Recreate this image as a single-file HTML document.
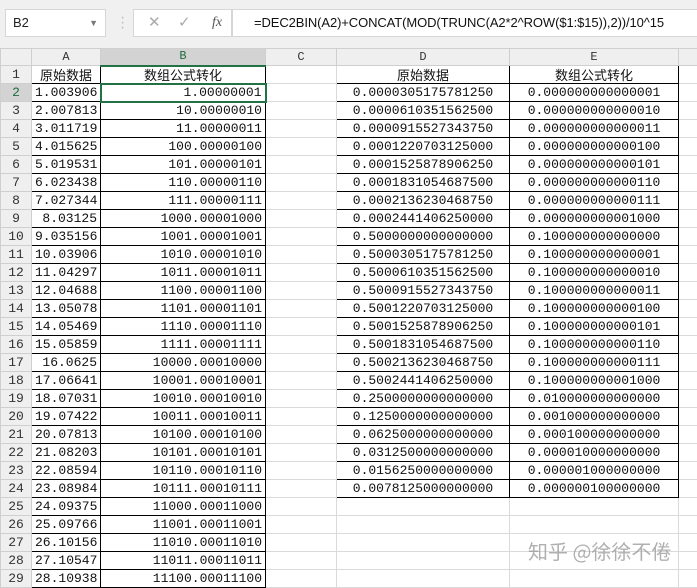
<!DOCTYPE html>
<html><head><meta charset="utf-8"><style>
body{margin:0;width:697px;height:579px;overflow:hidden;background:#fff;font-family:"Liberation Mono","Noto Sans CJK SC",monospace;position:relative}
.tb{position:absolute;left:0;top:0;width:697px;height:48px;background:#f0f0f0}
.box{position:absolute;background:#fff;border:1px solid #d6d6d6;top:9px;height:28px;box-sizing:border-box}
table{position:absolute;left:0;top:48px;width:708px;border-collapse:collapse;table-layout:fixed;font-size:13px}
tr{height:18px}
td{padding:0 3px;border:1px solid #dadada;white-space:nowrap;overflow:hidden;line-height:16px;color:#111;box-sizing:border-box}
tr.h{height:17px}
tr.h td{background:#efefef;text-align:center;font-size:12px;line-height:15px;color:#333;border-color:#cfcfcf}
td.r{background:#efefef;text-align:center;color:#333;border-color:#cfcfcf;padding:0}
td.n{text-align:right}
td.c{text-align:center}
.A{border:1px solid #000}
.cj{font-family:"Noto Sans CJK SC",sans-serif;font-size:13px;line-height:16px}
</style></head><body>
<div class="tb">
<div class="box" style="left:5px;width:101px;font:13px 'Liberation Sans',sans-serif;line-height:26px;padding-left:7px;color:#222">B2<span style="position:absolute;right:7px;top:0;font-size:9px;color:#777">▼</span></div>
<div style="position:absolute;left:119px;top:16px;color:#bbb;font-size:12px;line-height:5px">·<br>·<br>·</div>
<div class="box" style="left:133px;width:99px;color:#aaa;font:15px 'Liberation Sans',sans-serif;line-height:26px"><span style="position:absolute;left:14px">✕</span><span style="position:absolute;left:44px">✓</span><span style="position:absolute;left:78px;font-family:'Liberation Serif',serif;font-style:italic;color:#555;font-size:14px">fx</span></div>
<div class="box" style="left:232px;width:480px;font:13px 'Liberation Sans',sans-serif;line-height:26px;padding-left:21px;color:#111;letter-spacing:-0.1px">=DEC2BIN(A2)+CONCAT(MOD(TRUNC(A2*2^ROW($1:$15)),2))/10^15</div>
</div>
<table>
<colgroup><col style="width:31px"><col style="width:69px"><col style="width:165px"><col style="width:71px"><col style="width:173px"><col style="width:169px"><col style="width:30px"></colgroup>
<tr class="h"><td style="background:#efefef"></td><td>A</td><td style="background:#d3d3d3;color:#1e6b3f;border-bottom:2px solid #217346">B</td><td>C</td><td>D</td><td>E</td><td></td></tr>
<tr><td class="r">1</td><td class="A c cj">原始数据</td><td class="A c cj">数组公式转化</td><td></td><td class="A c cj">原始数据</td><td class="A c cj">数组公式转化</td><td></td></tr>
<tr><td class="r" style="background:#d3d3d3;color:#1e6b3f">2</td><td class="A n">1.003906</td><td class="n" style="border:2px solid #217346">1.00000001</td><td></td><td class="A c">0.0000305175781250</td><td class="A c">0.000000000000001</td><td></td></tr>
<tr><td class="r">3</td><td class="A n">2.007813</td><td class="A n">10.00000010</td><td></td><td class="A c">0.0000610351562500</td><td class="A c">0.000000000000010</td><td></td></tr>
<tr><td class="r">4</td><td class="A n">3.011719</td><td class="A n">11.00000011</td><td></td><td class="A c">0.0000915527343750</td><td class="A c">0.000000000000011</td><td></td></tr>
<tr><td class="r">5</td><td class="A n">4.015625</td><td class="A n">100.00000100</td><td></td><td class="A c">0.0001220703125000</td><td class="A c">0.000000000000100</td><td></td></tr>
<tr><td class="r">6</td><td class="A n">5.019531</td><td class="A n">101.00000101</td><td></td><td class="A c">0.0001525878906250</td><td class="A c">0.000000000000101</td><td></td></tr>
<tr><td class="r">7</td><td class="A n">6.023438</td><td class="A n">110.00000110</td><td></td><td class="A c">0.0001831054687500</td><td class="A c">0.000000000000110</td><td></td></tr>
<tr><td class="r">8</td><td class="A n">7.027344</td><td class="A n">111.00000111</td><td></td><td class="A c">0.0002136230468750</td><td class="A c">0.000000000000111</td><td></td></tr>
<tr><td class="r">9</td><td class="A n">8.03125</td><td class="A n">1000.00001000</td><td></td><td class="A c">0.0002441406250000</td><td class="A c">0.000000000001000</td><td></td></tr>
<tr><td class="r">10</td><td class="A n">9.035156</td><td class="A n">1001.00001001</td><td></td><td class="A c">0.5000000000000000</td><td class="A c">0.100000000000000</td><td></td></tr>
<tr><td class="r">11</td><td class="A n">10.03906</td><td class="A n">1010.00001010</td><td></td><td class="A c">0.5000305175781250</td><td class="A c">0.100000000000001</td><td></td></tr>
<tr><td class="r">12</td><td class="A n">11.04297</td><td class="A n">1011.00001011</td><td></td><td class="A c">0.5000610351562500</td><td class="A c">0.100000000000010</td><td></td></tr>
<tr><td class="r">13</td><td class="A n">12.04688</td><td class="A n">1100.00001100</td><td></td><td class="A c">0.5000915527343750</td><td class="A c">0.100000000000011</td><td></td></tr>
<tr><td class="r">14</td><td class="A n">13.05078</td><td class="A n">1101.00001101</td><td></td><td class="A c">0.5001220703125000</td><td class="A c">0.100000000000100</td><td></td></tr>
<tr><td class="r">15</td><td class="A n">14.05469</td><td class="A n">1110.00001110</td><td></td><td class="A c">0.5001525878906250</td><td class="A c">0.100000000000101</td><td></td></tr>
<tr><td class="r">16</td><td class="A n">15.05859</td><td class="A n">1111.00001111</td><td></td><td class="A c">0.5001831054687500</td><td class="A c">0.100000000000110</td><td></td></tr>
<tr><td class="r">17</td><td class="A n">16.0625</td><td class="A n">10000.00010000</td><td></td><td class="A c">0.5002136230468750</td><td class="A c">0.100000000000111</td><td></td></tr>
<tr><td class="r">18</td><td class="A n">17.06641</td><td class="A n">10001.00010001</td><td></td><td class="A c">0.5002441406250000</td><td class="A c">0.100000000001000</td><td></td></tr>
<tr><td class="r">19</td><td class="A n">18.07031</td><td class="A n">10010.00010010</td><td></td><td class="A c">0.2500000000000000</td><td class="A c">0.010000000000000</td><td></td></tr>
<tr><td class="r">20</td><td class="A n">19.07422</td><td class="A n">10011.00010011</td><td></td><td class="A c">0.1250000000000000</td><td class="A c">0.001000000000000</td><td></td></tr>
<tr><td class="r">21</td><td class="A n">20.07813</td><td class="A n">10100.00010100</td><td></td><td class="A c">0.0625000000000000</td><td class="A c">0.000100000000000</td><td></td></tr>
<tr><td class="r">22</td><td class="A n">21.08203</td><td class="A n">10101.00010101</td><td></td><td class="A c">0.0312500000000000</td><td class="A c">0.000010000000000</td><td></td></tr>
<tr><td class="r">23</td><td class="A n">22.08594</td><td class="A n">10110.00010110</td><td></td><td class="A c">0.0156250000000000</td><td class="A c">0.000001000000000</td><td></td></tr>
<tr><td class="r">24</td><td class="A n">23.08984</td><td class="A n">10111.00010111</td><td></td><td class="A c">0.0078125000000000</td><td class="A c">0.000000100000000</td><td></td></tr>
<tr><td class="r">25</td><td class="A n">24.09375</td><td class="A n">11000.00011000</td><td></td><td></td><td></td><td></td></tr>
<tr><td class="r">26</td><td class="A n">25.09766</td><td class="A n">11001.00011001</td><td></td><td></td><td></td><td></td></tr>
<tr><td class="r">27</td><td class="A n">26.10156</td><td class="A n">11010.00011010</td><td></td><td></td><td></td><td></td></tr>
<tr><td class="r">28</td><td class="A n">27.10547</td><td class="A n">11011.00011011</td><td></td><td></td><td></td><td></td></tr>
<tr><td class="r">29</td><td class="A n">28.10938</td><td class="A n">11100.00011100</td><td></td><td></td><td></td><td></td></tr>
</table>
<div style="position:absolute;left:528px;top:536px;font:20px 'Noto Sans CJK SC',sans-serif;color:rgba(150,150,150,0.75)">知乎 @徐徐不倦</div>
</body></html>
